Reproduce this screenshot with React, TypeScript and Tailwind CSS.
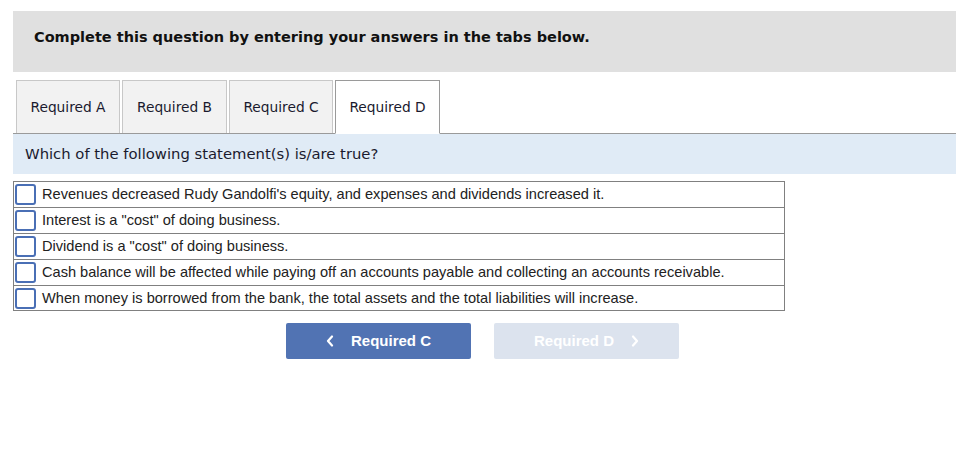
import React from "react";

const options = [
  "Revenues decreased Rudy Gandolfi's equity, and expenses and dividends increased it.",
  'Interest is a "cost" of doing business.',
  'Dividend is a "cost" of doing business.',
  "Cash balance will be affected while paying off an accounts payable and collecting an accounts receivable.",
  "When money is borrowed from the bank, the total assets and the total liabilities will increase.",
];

const tabs = ["Required A", "Required B", "Required C", "Required D"];

export default function App() {
  return (
    <div className="w-[956px] h-[455px] bg-white pl-[13px] pt-[11px]">
      <div
        className="h-[61px] bg-[#e0e0e0] flex items-center pl-[21px] pb-[8px] text-[14.5px] font-bold text-[#111]"
        style={{ fontFamily: "'DejaVu Sans', Verdana, sans-serif" }}
      >
        Complete this question by entering your answers in the tabs below.
      </div>

      <div
        className="mt-[8px] flex items-end gap-[2px] pl-[3px] border-b border-[#9a9a9a] h-[54px]"
        style={{ fontFamily: "'DejaVu Sans', Verdana, sans-serif" }}
      >
        {tabs.map((t, i) => {
          const active = i === 3;
          return (
            <div
              key={t}
              className={
                active
                  ? "w-[105px] h-[54px] -mb-px bg-white border border-[#9a9a9a] border-b-white flex items-center justify-center text-[13.75px] text-[#1a1a2e]"
                  : i === 1
                  ? "w-[105px] h-[53px] bg-[#f2f2f2] border border-b-0 border-[#c8c8c8] flex items-center justify-center text-[13.75px] text-[#1a1a2e]"
                  : "w-[104px] h-[53px] bg-[#f2f2f2] border border-b-0 border-[#c8c8c8] flex items-center justify-center text-[13.75px] text-[#1a1a2e]"
              }
            >
              {t}
            </div>
          );
        })}
      </div>

      <div
        className="h-[40px] bg-[#e0ebf6] flex items-center pl-[12px] text-[14.8px] text-[#1a1a2e]"
        style={{ fontFamily: "'DejaVu Sans', Verdana, sans-serif" }}
      >
        Which of the following statement(s) is/are true?
      </div>

      <div
        className="mt-[7px] w-[772px] border border-[#808080] flex flex-col"
        style={{ fontFamily: "'Liberation Sans', Arial, sans-serif" }}
      >
        {options.map((o, i) => (
          <div
            key={i}
            className={
              i === 0
                ? "h-[25px] flex items-center"
                : i === 4
                ? "h-[25px] flex items-center border-t border-[#808080]"
                : "h-[26px] flex items-center border-t border-[#808080]"
            }
          >
            <div className="w-[21px] h-[21px] ml-[1px] border-2 border-[#4a6fb5] rounded-[3px] bg-white shrink-0" />
            <span className="ml-[6px] text-[14.6px] text-[#222] leading-none">{o}</span>
          </div>
        ))}
      </div>

      <div
        className="mt-[12px] flex justify-center gap-[23px] pr-[4px]"
        style={{ fontFamily: "'Liberation Sans', Arial, sans-serif" }}
      >
        <div className="w-[185px] h-[36px] bg-[#5173b3] rounded-[2px] flex items-center justify-center text-white font-bold text-[15px]">
          <svg width="8" height="12" viewBox="0 0 8 12" className="mr-[17px]">
            <path d="M6 1.5 L2 6 L6 10.5" fill="none" stroke="white" strokeWidth="2.2" strokeLinecap="round" strokeLinejoin="round" />
          </svg>
          Required C
        </div>
        <div className="w-[185px] h-[36px] bg-[#dce3ee] rounded-[2px] flex items-center justify-center text-white font-bold text-[15px]">
          Required D
          <svg width="8" height="12" viewBox="0 0 8 12" className="ml-[17px]">
            <path d="M2 1.5 L6 6 L2 10.5" fill="none" stroke="white" strokeWidth="2.2" strokeLinecap="round" strokeLinejoin="round" />
          </svg>
        </div>
      </div>
    </div>
  );
}
